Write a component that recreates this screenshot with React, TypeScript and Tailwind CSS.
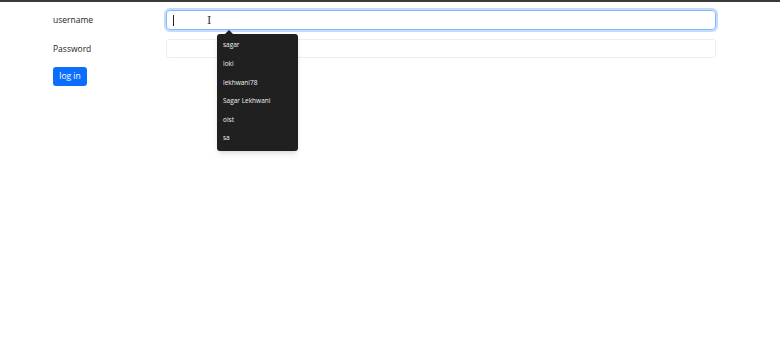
import React from 'react';

const names = ['sagar', 'loki', 'lekhwani78', 'Sagar Lekhwani', 'oist', 'sa'];

export default function App() {
  return (
    <div className="w-[780px] h-[360px] bg-white overflow-hidden font-['Open_Sans',sans-serif] text-[#212529]">
      <div className="h-[2px] bg-[#3a3a3a]" />
      <div className="pl-[53px] pt-[8px] flex flex-col">
        <div className="flex items-center h-[20px]">
          <label className="w-[113px] text-[8.5px] pt-px">username</label>
          <div className="relative">
            <div className="w-[550px] h-[20px] rounded-[4px] border border-[#86b7fe] shadow-[0_0_0_2px_rgba(13,110,253,0.25)] flex items-center pl-[6px]">
              <span className="w-px h-[11px] bg-[#222]" />
            </div>
            <span className="absolute left-[41px] top-[5px] text-[11px] leading-none text-[#333] font-['DejaVu_Serif',serif]">I</span>
            <div className="absolute left-[51px] top-[20px] z-10">
              <div className="ml-[8px] w-0 h-0 border-l-[4px] border-r-[4px] border-b-[4px] border-l-transparent border-r-transparent border-b-[#202020]" />
              <div className="w-[81px] bg-[#202020] rounded-[3px] shadow-md pt-[2px] pb-[3px]">
                {names.map((n) => (
                  <div key={n} className="h-[18.6px] flex items-center pl-[6px] text-[6.5px] text-[#f0f0f0]">
                    {n}
                  </div>
                ))}
              </div>
            </div>
          </div>
        </div>
        <div className="flex items-center h-[19px] mt-[9px]">
          <label className="w-[113px] text-[8.5px] pt-px">Password</label>
          <div className="w-[550px] h-[19px] rounded-[3px] border border-[#eceef0]" />
        </div>
        <div className="mt-[9px] flex">
          <button className="block w-[34px] h-[19px] rounded-[3px] bg-[#0d6efd] text-white text-[8.5px] leading-none">log in</button>
        </div>
      </div>
    </div>
  );
}
